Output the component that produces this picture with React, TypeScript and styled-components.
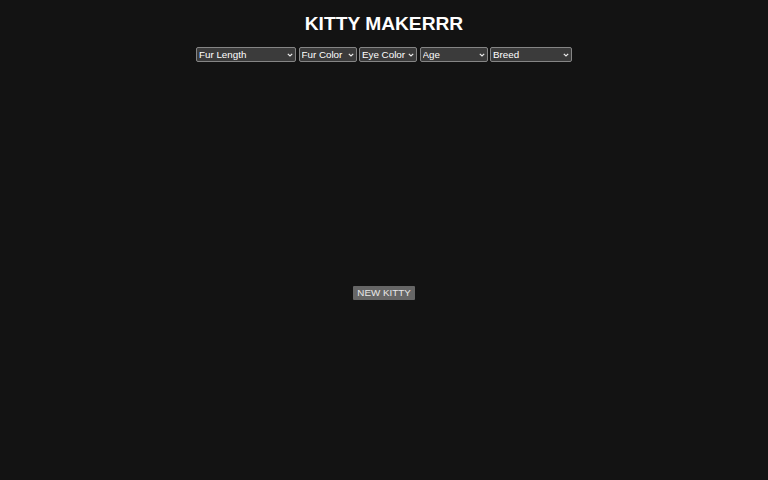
import * as React from 'react';
import styled, { createGlobalStyle } from 'styled-components';

const GlobalStyle = createGlobalStyle`
    html, body {
        margin: 0;
        padding: 0;
        background: #131313;
        color: #ffffff;
        font-family: "Liberation Sans", Arial, sans-serif;
    }
`;

const Page = styled.div`
    display: flex;
    flex-direction: column;
    align-items: center;
    width: 768px;
    height: 480px;
`;

const Title = styled.h1`
    margin: 13px 0 0 0;
    font-size: 19.2px;
    line-height: 22px;
    font-weight: bold;
`;

const Controls = styled.div`
    display: flex;
    gap: 2.5px;
    margin-top: 12px;
`;

const PickerWrap = styled.span<{ $width: number }>`
    position: relative;
    display: block;
    width: ${(p) => p.$width}px;
    height: 15px;
`;

const Picker = styled.select`
    appearance: none;
    display: block;
    width: 100%;
    height: 100%;
    margin: 0;
    padding: 0 10px 0 2px;
    font-family: "Liberation Sans", Arial, sans-serif;
    font-size: 9.8px;
    line-height: 13px;
    background: #3b3b3b;
    color: #ffffff;
    border: 1px solid #858585;
    border-radius: 2px;
    outline: none;
`;

const Chevron = styled.svg`
    position: absolute;
    right: 3px;
    top: 5.5px;
    width: 6px;
    height: 4px;
    pointer-events: none;
`;

const Stage = styled.div`
    height: 224px;
`;

const NewButton = styled.button`
    width: 62px;
    height: 14px;
    padding: 0;
    font-family: "Liberation Sans", Arial, sans-serif;
    font-size: 9.8px;
    line-height: 14px;
    background: #666666;
    color: #e8e8e8;
    border: none;
    border-radius: 1px;
`;

const pickers = [
    { label: 'Fur Length', width: 100 },
    { label: 'Fur Color', width: 58 },
    { label: 'Eye Color', width: 58 },
    { label: 'Age', width: 68 },
    { label: 'Breed', width: 82 },
];

export default function App() {
    return (
        <Page>
            <GlobalStyle />
            <Title>KITTY MAKERRR</Title>
            <Controls>
                {pickers.map((p) => (
                    <PickerWrap key={p.label} $width={p.width}>
                        <Picker defaultValue="">
                            <option value="">{p.label}</option>
                        </Picker>
                        <Chevron viewBox="0 0 6 4">
                            <path d="M0.8 0.8 L3 3 L5.2 0.8" fill="none" stroke="#ececec" strokeWidth="1.2" />
                        </Chevron>
                    </PickerWrap>
                ))}
            </Controls>
            <Stage />
            <NewButton>NEW KITTY</NewButton>
        </Page>
    );
}
